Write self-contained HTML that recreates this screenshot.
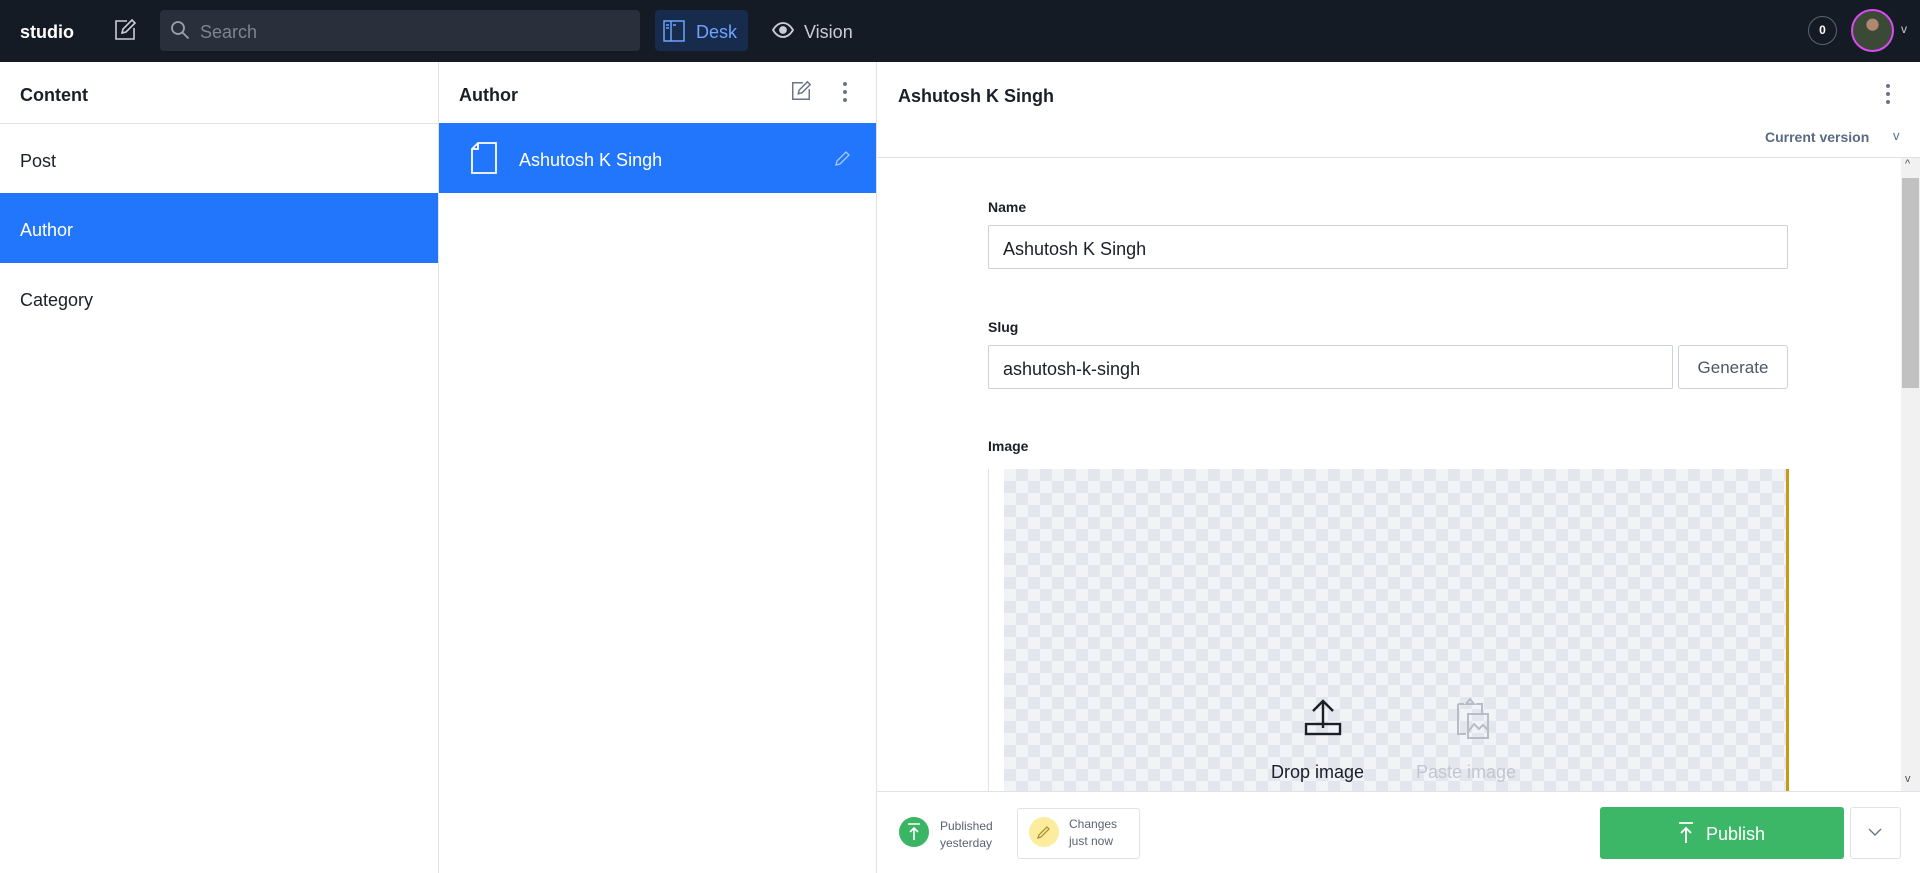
<!DOCTYPE html>
<html><head><meta charset="utf-8"><style>
*{box-sizing:border-box;margin:0;padding:0}
body{width:1920px;height:873px;overflow:hidden;font-family:"Liberation Sans",sans-serif;background:#fff;color:#1b1f28;position:relative}
.abs{position:absolute}
.top{left:0;top:0;width:1920px;height:62px;background:#151b25}
.col{top:62px;bottom:0;border-right:1px solid #dfe2e8}
.hdr{font-size:18px;font-weight:bold;color:#1b1f28}
.item{left:0;width:438px;height:70px;font-size:18px;padding-left:20px;line-height:74px}
.lbl{font-size:14px;font-weight:bold;color:#1b1f28}
.inp{border:1px solid #cdd1db;height:44px;font-size:18px;line-height:46px;padding-left:14px;border-radius:2px}
</style></head><body>
<div class="abs top"></div>
<div class="abs" style="left:20px;top:22px;color:#fff;font-weight:bold;font-size:18px">studio</div>
<svg class="abs" style="left:113px;top:18px" width="24" height="24" viewBox="0 0 24 24" fill="none" stroke="#c8cdd6" stroke-width="1.6"><path d="M14 3H3v18h18V10"/><path d="M9 15l1-4 9-9 3 3-9 9z"/></svg>
<div class="abs" style="left:160px;top:10px;width:480px;height:41px;background:#2a303b;border-radius:4px"></div>
<svg class="abs" style="left:170px;top:20px" width="20" height="20" viewBox="0 0 20 20" fill="none" stroke="#9aa1ad" stroke-width="1.8"><circle cx="8" cy="8" r="6"/><path d="M12.5 12.5l6 6"/></svg>
<div class="abs" style="left:200px;top:22px;color:#7d8592;font-size:18px">Search</div>
<div class="abs" style="left:655px;top:10px;width:93px;height:41px;background:#172b4d;border-radius:4px"></div>
<svg class="abs" style="left:663px;top:20px" width="22" height="22" viewBox="0 0 22 22" fill="none" stroke="#6fa3ff" stroke-width="1.5"><rect x="1" y="1" width="20" height="20"/><path d="M8 1v20M3 5h3M3 8h3M10 5h3"/></svg>
<div class="abs" style="left:696px;top:22px;color:#6fa3ff;font-size:18px">Desk</div>
<svg class="abs" style="left:772px;top:21px" width="22" height="18" viewBox="0 0 22 18" fill="none" stroke="#c8cdd6" stroke-width="1.8"><path d="M1 9c3-5 6-7 10-7s7 2 10 7c-3 5-6 7-10 7S4 14 1 9z"/><circle cx="11" cy="9" r="3" fill="#c8cdd6"/></svg>
<div class="abs" style="left:804px;top:22px;color:#c8cdd6;font-size:18px">Vision</div>
<div class="abs" style="left:1808px;top:16px;width:29px;height:29px;border:1px solid #5c6370;border-radius:50%;color:#fff;font-size:12px;font-weight:bold;text-align:center;line-height:27px">0</div>
<div class="abs" style="left:1851px;top:9px;width:43px;height:43px;border:2px solid #d94bf2;border-radius:50%;background:radial-gradient(circle at 50% 35%,#b08870 0 18%,#3b4a36 20% 100%)"></div>
<div class="abs" style="left:1901px;top:22px;color:#c8cdd6;font-size:12px">v</div>

<div class="abs col" style="left:0;width:439px"></div>
<div class="abs hdr" style="left:20px;top:85px">Content</div>
<div class="abs" style="left:0;top:123px;width:438px;height:1px;background:#dfe2e8"></div>
<div class="abs item" style="top:124px">Post</div>
<div class="abs item" style="top:193px;background:#2276fc;color:#fff">Author</div>
<div class="abs item" style="top:263px">Category</div>

<div class="abs col" style="left:439px;width:438px"></div>
<div class="abs hdr" style="left:459px;top:85px">Author</div>
<svg class="abs" style="left:790px;top:80px" width="22" height="22" viewBox="0 0 24 24" fill="none" stroke="#6b7486" stroke-width="1.6"><path d="M14 3H3v18h18V10"/><path d="M9 15l1-4 9-9 3 3-9 9z"/></svg>
<svg class="abs" style="left:840px;top:80px" width="10" height="24"><circle cx="5" cy="4" r="2" fill="#6b7486"/><circle cx="5" cy="12" r="2" fill="#6b7486"/><circle cx="5" cy="20" r="2" fill="#6b7486"/></svg>
<div class="abs" style="left:439px;top:123px;width:437px;height:70px;background:#2276fc"></div>
<svg class="abs" style="left:471px;top:142px" width="26" height="32" viewBox="0 0 26 32" fill="none" stroke="#fff" stroke-width="1.8"><path d="M7 1h18v30H1V7z M7 1v6H1"/></svg>
<div class="abs" style="left:519px;top:150px;color:#fff;font-size:18px">Ashutosh K Singh</div>
<svg class="abs" style="left:835px;top:150px" width="16" height="16" viewBox="0 0 16 16" fill="none" stroke="#a9c8ff" stroke-width="1.3"><path d="M1 15l1-4 9-9 3 3-9 9z"/></svg>

<div class="abs hdr" style="left:898px;top:86px">Ashutosh K Singh</div>
<svg class="abs" style="left:1883px;top:82px" width="10" height="24"><circle cx="5" cy="4" r="2" fill="#6b7486"/><circle cx="5" cy="12" r="2" fill="#6b7486"/><circle cx="5" cy="20" r="2" fill="#6b7486"/></svg>
<div class="abs" style="left:1765px;top:129px;color:#5a6a85;font-size:14px;font-weight:bold">Current version</div>
<div class="abs" style="left:1893px;top:128px;color:#5a6a85;font-size:13px">v</div>
<div class="abs" style="left:877px;top:157px;width:1043px;height:1px;background:#dfe2e8"></div>
<div class="abs" style="left:1901px;top:158px;width:19px;height:633px;background:#f1f1f1"></div>
<div class="abs" style="left:1902px;top:178px;width:17px;height:210px;background:#c1c1c1"></div>
<div class="abs" style="left:1905px;top:158px;font-size:11px;color:#505050">^</div>
<div class="abs" style="left:1905px;top:773px;font-size:11px;color:#505050">v</div>

<div class="abs lbl" style="left:988px;top:199px">Name</div>
<div class="abs inp" style="left:988px;top:225px;width:800px">Ashutosh K Singh</div>
<div class="abs lbl" style="left:988px;top:319px">Slug</div>
<div class="abs inp" style="left:988px;top:345px;width:685px">ashutosh-k-singh</div>
<div class="abs" style="left:1678px;top:345px;width:110px;height:44px;border:1px solid #cdd1db;border-radius:3px;color:#4d5666;font-size:17px;text-align:center;line-height:44px">Generate</div>
<div class="abs lbl" style="left:988px;top:438px">Image</div>
<div class="abs" style="left:988px;top:469px;width:1px;height:322px;background:#dfe2e8"></div>
<div class="abs" style="left:1004px;top:469px;width:785px;height:322px;background-color:#f2f3f7;background-image:linear-gradient(45deg,#e4e6ee 25%,transparent 25%,transparent 75%,#e4e6ee 75%),linear-gradient(45deg,#e4e6ee 25%,transparent 25%,transparent 75%,#e4e6ee 75%);background-size:24px 24px;background-position:0 0,12px 12px;border-right:3px solid #c49b17"></div>
<svg class="abs" style="left:1303px;top:698px" width="40" height="40" viewBox="0 0 40 40" fill="none" stroke="#1b1f28" stroke-width="2.4"><path d="M20 30V3M10 13L20 3l10 10"/><rect x="3" y="26" width="34" height="10"/></svg>
<div class="abs" style="left:1271px;top:762px;font-size:18px;color:#1b1f28">Drop image</div>
<svg class="abs" style="left:1450px;top:698px" width="40" height="42" viewBox="0 0 40 42" fill="none" stroke="#b7bcc6" stroke-width="2"><path d="M8 6h6M26 6h6v10M8 6v30h8"/><path d="M16 6l4-5 4 5z"/><rect x="18" y="16" width="20" height="24"/><path d="M18 34l6-8 5 5 4-4 5 5"/></svg>
<div class="abs" style="left:1416px;top:762px;font-size:18px;color:#c2c6cf">Paste image</div>

<div class="abs" style="left:877px;top:791px;width:1043px;height:1px;background:#dfe2e8"></div>
<div class="abs" style="left:899px;top:817px;width:30px;height:30px;border-radius:50%;background:#3ab564"></div>
<svg class="abs" style="left:906px;top:823px" width="16" height="18" viewBox="0 0 16 18" fill="none" stroke="#fff" stroke-width="1.6"><path d="M2 1h12M8 17V5M4 9l4-4 4 4"/></svg>
<div class="abs" style="left:940px;top:818px;font-size:12px;color:#5a6272;line-height:17px">Published<br>yesterday</div>
<div class="abs" style="left:1017px;top:808px;width:123px;height:51px;border:1px solid #dfe2e8;border-radius:3px"></div>
<div class="abs" style="left:1029px;top:817px;width:30px;height:30px;border-radius:50%;background:#fbec9e"></div>
<svg class="abs" style="left:1037px;top:825px" width="14" height="14" viewBox="0 0 14 14" fill="none" stroke="#a48a2a" stroke-width="1.2"><path d="M1 13l1-3 8-8 2 2-8 8z"/></svg>
<div class="abs" style="left:1069px;top:816px;font-size:12px;color:#5a6272;line-height:17px">Changes<br>just now</div>
<div class="abs" style="left:1600px;top:807px;width:244px;height:52px;background:#3cb767;border-radius:3px"></div>
<svg class="abs" style="left:1678px;top:822px" width="16" height="22" viewBox="0 0 16 22" fill="none" stroke="#fff" stroke-width="1.8"><path d="M1 1h14M8 21V6M3 11l5-5 5 5"/></svg>
<div class="abs" style="left:1706px;top:824px;color:#fff;font-size:18px">Publish</div>
<div class="abs" style="left:1850px;top:807px;width:51px;height:52px;border:1px solid #dfe2e8;border-radius:3px"></div>
<svg class="abs" style="left:1868px;top:828px" width="14" height="9" viewBox="0 0 14 9" fill="none" stroke="#6b7486" stroke-width="1.4"><path d="M1 1l6 6 6-6"/></svg>
</body></html>
